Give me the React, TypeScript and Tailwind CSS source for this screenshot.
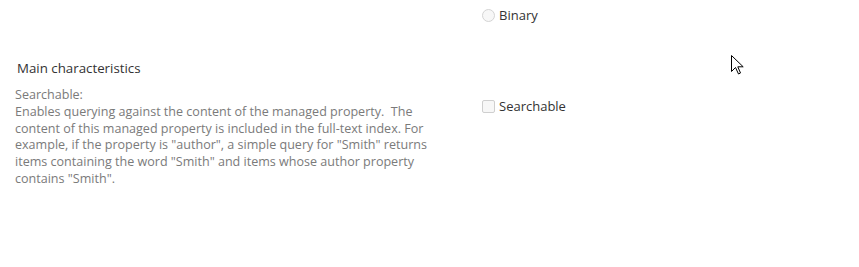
import React from "react";

export default function App() {
  const font = { fontFamily: '"Open Sans", "Segoe UI", sans-serif' };
  return (
    <div className="relative w-[859px] h-[267px] bg-white overflow-hidden" style={font}>
      <div className="flex pt-[7px]">
        <div className="w-[482px] shrink-0" />
        <label className="flex items-center gap-[4px] text-[13px] leading-[16px] text-[#333]">
          <span className="w-[13px] h-[13px] rounded-full border border-[#d4d4d4] bg-[#f7f7f7] inline-block" />
          <span>Binary</span>
        </label>
      </div>
      <div className="pl-[17px] pt-[36px] text-[13.3px] leading-[18px] text-[#333]">Main characteristics</div>
      <div className="flex pt-[10px]">
        <div className="w-[482px] shrink-0 pl-[15px] text-[12.55px] leading-[16.8px] text-[#7a7a7a]">
          <div>Searchable:</div>
          <div>Enables querying against the content of the managed property.&nbsp; The</div>
          <div>content of this managed property is included in the full-text index. For</div>
          <div>example, if the property is "author", a simple query for "Smith" returns</div>
          <div>items containing the word "Smith" and items whose author property</div>
          <div>contains "Smith".</div>
        </div>
        <label className="flex items-center gap-[4px] self-start mt-[11px] text-[13px] leading-[16px] text-[#333]">
          <span className="w-[13px] h-[13px] rounded-[2px] border border-[#cfcfcf] bg-[#f7f7f7] inline-block" />
          <span>Searchable</span>
        </label>
      </div>
      <svg className="absolute left-[731px] top-[55px]" width="13" height="20" viewBox="0 0 13 20">
        <path d="M0.5 0.5 L0.5 16.5 L4.5 12.5 L7.5 19 L9.5 18 L6.8 11.8 L12.2 11.8 Z" fill="#fff" stroke="#000" strokeWidth="1" strokeLinejoin="miter" />
      </svg>
    </div>
  );
}
